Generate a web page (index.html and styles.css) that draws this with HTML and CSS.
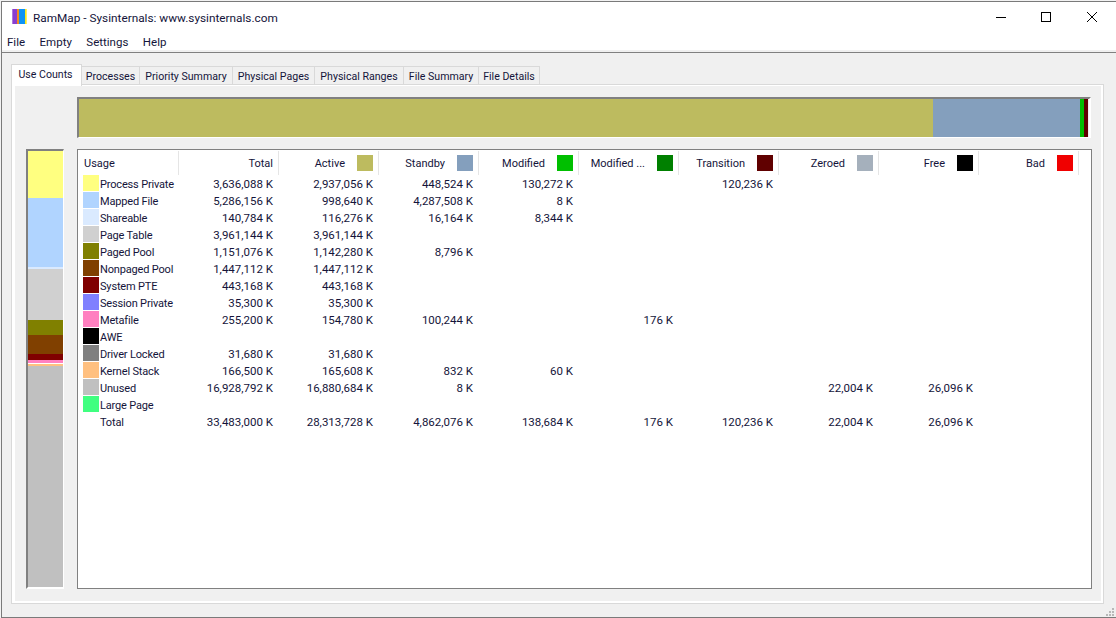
FILE: index.html
```html
<!DOCTYPE html>
<html lang="en">
<head>
    <meta charset="UTF-8">
    <meta name="viewport" content="width=device-width, initial-scale=1.0">
    <title>RamMap - Sysinternals: www.sysinternals.com</title>
    <link rel="stylesheet" href="styles.css">
</head>
<body>
<div class="window">
    <!-- Title bar -->
    <header class="titlebar">
        <svg class="app-icon" width="16" height="16" viewBox="0 0 16 16">
            <rect x="1.3" y="0" width="4.7" height="15" fill="#8a3fd0"/>
            <rect x="6" y="0" width="2" height="15" fill="#f58a1f"/>
            <rect x="8" y="0" width="6" height="15" fill="#0f93f5"/>
            <rect x="14" y="0" width="1.7" height="15" fill="#ffe81a"/>
        </svg>
        <span class="title-text">RamMap - Sysinternals: www.sysinternals.com</span>
        <div class="controls">
            <svg class="ctl" width="46" height="30" viewBox="0 0 46 30"><path d="M19 15.5h10" stroke="#000" fill="none"/></svg>
            <svg class="ctl" width="46" height="30" viewBox="0 0 46 30"><rect x="18.5" y="10.5" width="9" height="9" stroke="#000" fill="none"/></svg>
            <svg class="ctl" width="46" height="30" viewBox="0 0 46 30"><path d="M18 10l10 10M28 10l-10 10" stroke="#000" fill="none"/></svg>
        </div>
    </header>

    <nav class="menubar">
        <span>File</span>
        <span>Empty</span>
        <span>Settings</span>
        <span>Help</span>
    </nav>

    <main class="client">
        <div class="tabs">
            <div class="tab active">Use Counts</div>
            <div class="tab w-processes">Processes</div>
            <div class="tab w-priority">Priority Summary</div>
            <div class="tab w-pages">Physical Pages</div>
            <div class="tab w-ranges">Physical Ranges</div>
            <div class="tab w-summary">File Summary</div>
            <div class="tab w-details">File Details</div>
        </div>

        <section class="panel">
            <div class="top-row">
                <div class="hbar sunken">
                    <div class="c-active g-active"></div>
                    <div class="c-standby g-standby"></div>
                    <div class="c-modified g-modified"></div>
                    <div class="c-transition g-transition"></div>
                </div>
            </div>

            <div class="bottom-row">
                <div class="vbar sunken">
                    <div class="c-private h-private"></div>
                    <div class="c-mapped h-mapped"></div>
                    <div class="c-shareable h-shareable"></div>
                    <div class="c-pagetable h-pagetable"></div>
                    <div class="c-pagedpool h-pagedpool"></div>
                    <div class="c-nonpaged h-nonpaged"></div>
                    <div class="c-pte h-pte"></div>
                    <div class="c-metafile h-metafile"></div>
                    <div class="c-white h-gap"></div>
                    <div class="c-kstack h-kstack"></div>
                    <div class="c-unused h-unused"></div>
                </div>

                <div class="list">
                    <div class="list-head">
                        <div class="hd first">Usage</div>
                        <div class="hd">Total</div>
                        <div class="hd sw">Active<i class="c-active"></i></div>
                        <div class="hd sw">Standby<i class="c-standby"></i></div>
                        <div class="hd sw">Modified<i class="c-modified"></i></div>
                        <div class="hd sw">Modified ...<i class="c-modnowrite"></i></div>
                        <div class="hd sw">Transition<i class="c-transition"></i></div>
                        <div class="hd sw">Zeroed<i class="c-zeroed"></i></div>
                        <div class="hd sw">Free<i class="c-free"></i></div>
                        <div class="hd sw">Bad<i class="c-bad"></i></div>
                    </div>

                    <div class="row"><div class="name"><i class="c-private"></i>Process Private</div><div>3,636,088 K</div><div>2,937,056 K</div><div>448,524 K</div><div>130,272 K</div><div></div><div>120,236 K</div><div></div><div></div><div></div></div>
                    <div class="row"><div class="name"><i class="c-mapped"></i>Mapped File</div><div>5,286,156 K</div><div>998,640 K</div><div>4,287,508 K</div><div>8 K</div><div></div><div></div><div></div><div></div><div></div></div>
                    <div class="row"><div class="name"><i class="c-shareable"></i>Shareable</div><div>140,784 K</div><div>116,276 K</div><div>16,164 K</div><div>8,344 K</div><div></div><div></div><div></div><div></div><div></div></div>
                    <div class="row"><div class="name"><i class="c-pagetable"></i>Page Table</div><div>3,961,144 K</div><div>3,961,144 K</div><div></div><div></div><div></div><div></div><div></div><div></div><div></div></div>
                    <div class="row"><div class="name"><i class="c-pagedpool"></i>Paged Pool</div><div>1,151,076 K</div><div>1,142,280 K</div><div>8,796 K</div><div></div><div></div><div></div><div></div><div></div><div></div></div>
                    <div class="row"><div class="name"><i class="c-nonpaged"></i>Nonpaged Pool</div><div>1,447,112 K</div><div>1,447,112 K</div><div></div><div></div><div></div><div></div><div></div><div></div><div></div></div>
                    <div class="row"><div class="name"><i class="c-pte"></i>System PTE</div><div>443,168 K</div><div>443,168 K</div><div></div><div></div><div></div><div></div><div></div><div></div><div></div></div>
                    <div class="row"><div class="name"><i class="c-session"></i>Session Private</div><div>35,300 K</div><div>35,300 K</div><div></div><div></div><div></div><div></div><div></div><div></div><div></div></div>
                    <div class="row"><div class="name"><i class="c-metafile"></i>Metafile</div><div>255,200 K</div><div>154,780 K</div><div>100,244 K</div><div></div><div>176 K</div><div></div><div></div><div></div><div></div></div>
                    <div class="row"><div class="name"><i class="c-free"></i>AWE</div><div></div><div></div><div></div><div></div><div></div><div></div><div></div><div></div><div></div></div>
                    <div class="row"><div class="name"><i class="c-locked"></i>Driver Locked</div><div>31,680 K</div><div>31,680 K</div><div></div><div></div><div></div><div></div><div></div><div></div><div></div></div>
                    <div class="row"><div class="name"><i class="c-kstack"></i>Kernel Stack</div><div>166,500 K</div><div>165,608 K</div><div>832 K</div><div>60 K</div><div></div><div></div><div></div><div></div><div></div></div>
                    <div class="row"><div class="name"><i class="c-unused"></i>Unused</div><div>16,928,792 K</div><div>16,880,684 K</div><div>8 K</div><div></div><div></div><div></div><div>22,004 K</div><div>26,096 K</div><div></div></div>
                    <div class="row"><div class="name"><i class="c-large"></i>Large Page</div><div></div><div></div><div></div><div></div><div></div><div></div><div></div><div></div><div></div></div>
                    <div class="row"><div class="name"><i></i>Total</div><div>33,483,000 K</div><div>28,313,728 K</div><div>4,862,076 K</div><div>138,684 K</div><div>176 K</div><div>120,236 K</div><div>22,004 K</div><div>26,096 K</div><div></div></div>
                </div>
            </div>
        </section>
        <svg class="grip" width="10" height="10" viewBox="0 0 10 10" fill="#b8b8b8">
            <rect x="7" y="1" width="2" height="2"/>
            <rect x="4" y="4" width="2" height="2"/>
            <rect x="7" y="4" width="2" height="2"/>
            <rect x="1" y="7" width="2" height="2"/>
            <rect x="4" y="7" width="2" height="2"/>
            <rect x="7" y="7" width="2" height="2"/>
        </svg>
    </main>
</div>
</body>
</html>
```

FILE: styles.css
```css
/* General styling */
html, body {
    margin: 0;
    height: 100%;
    overflow: hidden;
}

body {
    box-sizing: border-box;
    padding: 1px 0 0 1px;
    background-color: #f2f2f2;
    font-family: Roboto, "Noto Sans", Arial, sans-serif;
    font-size: 11.5px;
    color: #14143a;
}

.window {
    position: relative;
    box-sizing: border-box;
    height: 617px;
    border: 1px solid #7a7a7a;
    border-right: none;
    background-color: #fff;
    display: flex;
    flex-direction: column;
}

/* Title bar */
.titlebar {
    height: 29px;
    display: flex;
    align-items: center;
    flex-shrink: 0;
}

.app-icon {
    margin-left: 9px;
    margin-top: 1px;
}

.title-text {
    margin-left: 6px;
    font-size: 11.8px;
    margin-top: 2px;
}

.controls {
    margin-left: auto;
    display: flex;
    align-self: flex-start;
    margin-right: 1px;
}

.ctl {
    display: block;
}

/* Menu */
.menubar {
    box-sizing: border-box;
    height: 21px;
    padding: 2px 0 0 5px;
    display: flex;
    gap: 14.5px;
    align-items: center;
    font-size: 11.5px;
    border-bottom: 2px solid #f0f0f0;
    flex-shrink: 0;
}

/* Client area */
.client {
    position: relative;
    flex: 1;
    background-color: #f0f0f0;
    border-top: 1px solid #808080;
    padding: 11px 12px 13px 9px;
    display: flex;
    flex-direction: column;
}

.tabs {
    display: flex;
    align-items: flex-end;
    height: 21px;
    position: relative;
    z-index: 1;
}

.tab {
    box-sizing: border-box;
    height: 18px;
    margin-bottom: 1px;
    border: 1px solid #d9d9d9;
    border-left: none;
    border-bottom: none;
    background-color: #f0f0f0;
    text-align: center;
    line-height: 19px;
    font-size: 10.6px;
    white-space: nowrap;
}

.tab.active {
    width: 71px;
    height: 22px;
    margin-bottom: -1px;
    padding-right: 2px;
    border: 1px solid #d9d9d9;
    border-bottom: none;
    background-color: #fff;
    line-height: 19px;
}

.w-processes { width: 58px; }
.w-priority { width: 93px; }
.w-pages { width: 82px; }
.w-ranges { width: 89px; }
.w-summary { width: 75px; }
.w-details { width: 61px; }

.panel {
    flex: 1;
    margin-top: -1px;
    border: 1px solid #d9d9d9;
    box-shadow: inset 3px 1px 0 #fff, inset -2px -2px 0 #fff;
    padding: 12px 11px 14px 14px;
    display: flex;
    flex-direction: column;
}

.top-row {
    padding-left: 51px;
}

.sunken {
    box-sizing: border-box;
    border-top: 2px solid #808080;
    border-left: 2px solid #808080;
    border-right: 2px solid #fff;
    border-bottom: 2px solid #fff;
    background-color: #f0f0f0;
    display: flex;
}

.hbar {
    height: 41px;
    margin-right: 1px;
    padding-right: 1px;
    border-bottom-width: 1px;
}

.vbar {
    width: 38px;
    flex-direction: column;
    margin-right: 13px;
    border-right-width: 1px;
}

.bottom-row {
    flex: 1;
    display: flex;
    margin-top: 11px;
}

.g-active { width: 854px; }
.g-standby { width: 147px; }
.g-modified { width: 4px; }
.g-transition { width: 4px; }

.h-private { height: 47px; }
.h-mapped { height: 69px; }
.h-shareable { height: 2px; }
.h-pagetable { height: 51px; }
.h-pagedpool { height: 15px; }
.h-nonpaged { height: 19px; }
.h-pte { height: 6px; }
.h-metafile { height: 3px; }
.h-gap { height: 1px; }
.h-kstack { height: 2px; }
.h-unused { flex: 1; }

/* Legend colours */
.c-active { background-color: #bdbb5f; }
.c-standby { background-color: #849fbd; }
.c-modified { background-color: #00bf00; }
.c-modnowrite { background-color: #008000; }
.c-transition { background-color: #600000; }
.c-zeroed { background-color: #a5b0bc; }
.c-free { background-color: #000; }
.c-bad { background-color: #f00000; }
.c-private { background-color: #ffff80; }
.c-mapped { background-color: #b0d4ff; }
.c-shareable { background-color: #daeaff; }
.c-pagetable { background-color: #d0d0d0; }
.c-pagedpool { background-color: #808000; }
.c-nonpaged { background-color: #804000; }
.c-pte { background-color: #800000; }
.c-session { background-color: #8080ff; }
.c-metafile { background-color: #ff80c0; }
.c-locked { background-color: #808080; }
.c-kstack { background-color: #ffc080; }
.c-unused { background-color: #c0c0c0; }
.c-large { background-color: #40ff80; }
.c-white { background-color: #fff; }

/* Table */
.list {
    flex: 1;
    box-sizing: border-box;
    background-color: #fff;
    border: 1px solid #808080;
    padding-top: 1px;
}

.list-head, .row {
    display: grid;
    grid-template-columns: 101px repeat(9, 100px);
}

.list-head {
    height: 24px;
}

.hd {
    box-sizing: border-box;
    border-right: 1px solid #e5e5e5;
    display: flex;
    align-items: center;
    justify-content: flex-end;
    padding-right: 5px;
    font-size: 11px;
}

.hd.first {
    justify-content: flex-start;
    padding-left: 6px;
}

.hd i {
    width: 16px;
    height: 16px;
    margin-left: 12px;
}

.row {
    height: 17px;
    line-height: 18px;
    white-space: nowrap;
}

.row > div {
    text-align: right;
    padding-right: 6px;
}

.row .name {
    display: flex;
    padding: 0 0 0 5px;
    text-align: left;
    font-size: 11px;
    line-height: 20px;
    letter-spacing: -0.17px;
}

.name i {
    width: 16px;
    height: 16px;
    margin-right: 1px;
    flex-shrink: 0;
}

/* Resize grip */
.grip {
    position: absolute;
    right: 1px;
    bottom: 0;
}
```
